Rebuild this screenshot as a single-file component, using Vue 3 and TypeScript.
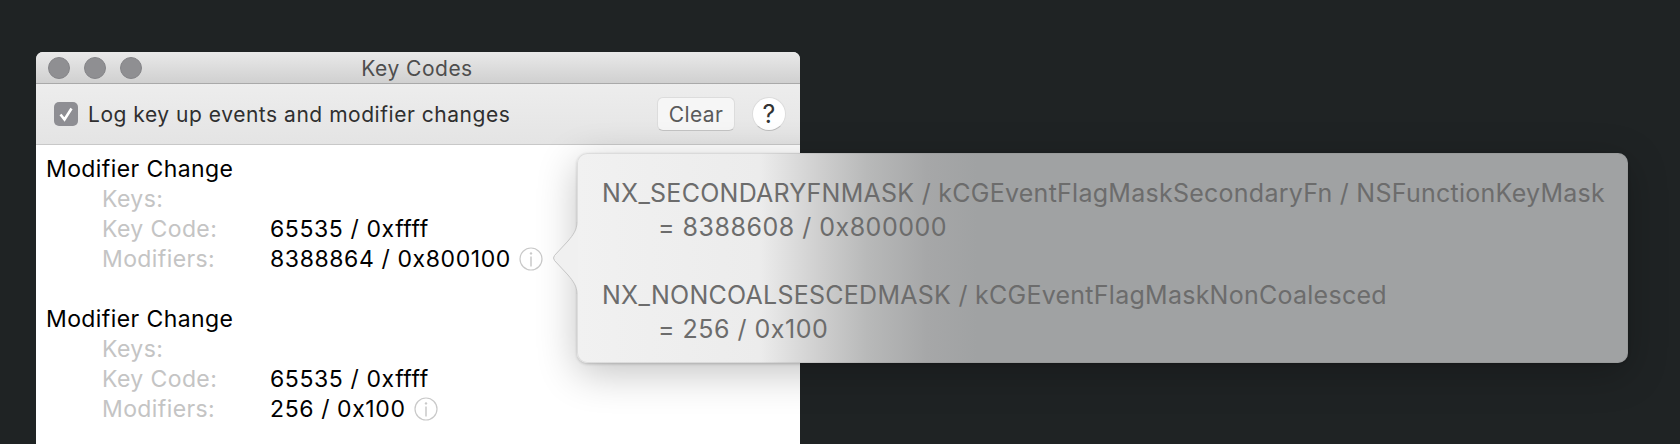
<script setup lang="ts">
interface Row { label: string; value: string; info?: boolean }
const events: { title: string; rows: Row[] }[] = [
  { title: 'Modifier Change', rows: [
    { label: 'Keys:', value: '' },
    { label: 'Key Code:', value: '65535 / 0xffff' },
    { label: 'Modifiers:', value: '8388864 / 0x800100', info: true },
  ] },
  { title: 'Modifier Change', rows: [
    { label: 'Keys:', value: '' },
    { label: 'Key Code:', value: '65535 / 0xffff' },
    { label: 'Modifiers:', value: '256 / 0x100', info: true },
  ] },
]
const masks = [
  { name: 'NX_SECONDARYFNMASK / kCGEventFlagMaskSecondaryFn / NSFunctionKeyMask', value: '= 8388608 / 0x800000' },
  { name: 'NX_NONCOALSESCEDMASK / kCGEventFlagMaskNonCoalesced', value: '= 256 / 0x100' },
]
</script>

<template>
  <div class="stage">
    <section class="window">
      <header class="titlebar">
        <div class="lights"><i></i><i></i><i></i></div>
        <span class="title">Key Codes</span>
      </header>
      <div class="toolbar">
        <span class="check">
          <svg viewBox="0 0 24 24" width="24" height="24"><path d="M6.5 12.5 L10.5 17.5 L17.5 6.5" fill="none" stroke="#fff" stroke-width="2.6" /></svg>
        </span>
        <span class="check-label">Log key up events and modifier changes</span>
        <button class="clear">Clear</button>
        <button class="help">?</button>
      </div>
      <div class="log">
        <div v-for="(ev, i) in events" :key="i" class="event">
          <div class="ev-title">{{ ev.title }}</div>
          <div v-for="row in ev.rows" :key="row.label" class="row">
            <span class="label">{{ row.label }}</span>
            <span class="value">{{ row.value }}
              <svg v-if="row.info" class="info" viewBox="0 0 24 24" width="24" height="24">
                <circle cx="12" cy="12" r="11" fill="none" stroke="#c9c9c9" stroke-width="1.2" />
                <circle cx="12" cy="6.4" r="1.2" fill="#c9c9c9" />
                <path d="M12 9.6 V19.4" stroke="#c9c9c9" stroke-width="1.5" />
              </svg>
            </span>
          </div>
        </div>
      </div>
    </section>

    <aside class="popover">
      <svg class="arrow" viewBox="0 0 26 72" width="26" height="72">
        <path d="M25 0 C25 8 21 13 16 19 L2.5 33.5 Q0.5 36 2.5 38.5 L16 53 C21 59 25 64 25 72 L26 72 L26 0 Z" fill="#f0f0f0" />
        <path d="M25 0 C25 8 21 13 16 19 L2.5 33.5 Q0.5 36 2.5 38.5 L16 53 C21 59 25 64 25 72" fill="none" stroke="#c6c6c6" stroke-width="1" />
      </svg>
      <div v-for="m in masks" :key="m.name" class="mask">
        <div class="mask-name">{{ m.name }}</div>
        <div class="mask-value">{{ m.value }}</div>
      </div>
    </aside>
  </div>
</template>

<style>
html, body { margin: 0; background: #1f2324; overflow: hidden; }
</style>

<style scoped>
.stage {
  position: relative;
  width: 1680px;
  height: 444px;
  overflow: hidden;
  box-sizing: border-box;
  padding: 52px 0 0 36px;
  background: #1f2324;
  font-family: Inter, "Noto Sans", sans-serif;
}
.window {
  width: 764px;
  height: 392px;
  border-radius: 7px 7px 0 0;
  overflow: hidden;
  background: #fff;
  display: flex;
  flex-direction: column;
}
.titlebar {
  height: 31px;
  flex: none;
  display: flex;
  align-items: center;
  justify-content: center;
  position: relative;
  background: linear-gradient(#e9e9e9, #d0d0d0);
  border-bottom: 1px solid #a9a9a9;
}
.lights {
  position: absolute;
  left: 12px;
  top: 5px;
  display: flex;
  gap: 14px;
}
.lights i {
  width: 22px;
  height: 22px;
  box-sizing: border-box;
  border-radius: 50%;
  background: #8f8f92;
  border: 1px solid #858588;
}
.title { font-size: 21px; color: #4e4e4e; letter-spacing: .5px; position: relative; left: -1px; top: .5px; }
.toolbar {
  height: 61px;
  flex: none;
  box-sizing: border-box;
  display: flex;
  align-items: center;
  padding: 0 14px 0 18px;
  background: linear-gradient(#ededed, #e4e4e4);
  border-bottom: 1px solid #c8c8c8;
}
.check {
  width: 24px;
  height: 24px;
  border-radius: 5px;
  background: #8e8e93;
  display: flex;
}
.check-label { margin-left: 10px; font-size: 21px; letter-spacing: .53px; color: #2f2f2f; flex: 1; }
.clear {
  width: 78px;
  height: 34px;
  padding: 0;
  border: 1px solid #dcdcdc;
  border-bottom-color: #c4c4c4;
  border-radius: 6px;
  background: #f6f6f6;
  color: #5a5a5a;
  letter-spacing: .4px;
  font: 21px Inter, "Noto Sans", sans-serif;
}
.help {
  width: 34px;
  height: 34px;
  margin-left: 17px;
  padding: 0;
  border: 1px solid #dcdcdc;
  border-bottom-color: #bdbdbd;
  border-radius: 50%;
  background: #fff;
  color: #333;
  font: 25px Inter, "Noto Sans", sans-serif;
}
.log { padding: 9px 0 0 10px; font-size: 23px; line-height: 30px; color: #000; letter-spacing: .4px; }
.event { margin-bottom: 30px; }
.row {
  display: grid;
  grid-template-columns: 168px 1fr;
  padding-left: 56px;
  height: 30px;
}
.label { color: #c4c4c4; }
.value { display: flex; align-items: center; gap: 8px; letter-spacing: .6px; }
.info { flex: none; }
.popover {
  position: absolute;
  left: 577px;
  top: 153px;
  width: 1051px;
  height: 210px;
  box-sizing: border-box;
  padding: 23px 0 0 25px;
  border-radius: 10px;
  background: linear-gradient(90deg, #f1f1f1 0, #ececec 183px, #d0d0d0 240px, #b8b9b9 290px, #a6a7a8 350px, #a0a2a3 400px);
  box-shadow: inset 0 0 0 1px rgba(120,120,120,.16), 0 1px 3px rgba(0,0,0,.2), 0 10px 40px rgba(0,0,0,.24);
  font-size: 25px;
  line-height: 34px;
  color: #6c6c6c;
  letter-spacing: .26px;
}
.arrow { position: absolute; left: -25px; top: 69px; }
.mask { margin-bottom: 34px; white-space: nowrap; }
.mask-value { padding-left: 56px; letter-spacing: .5px; }
</style>
